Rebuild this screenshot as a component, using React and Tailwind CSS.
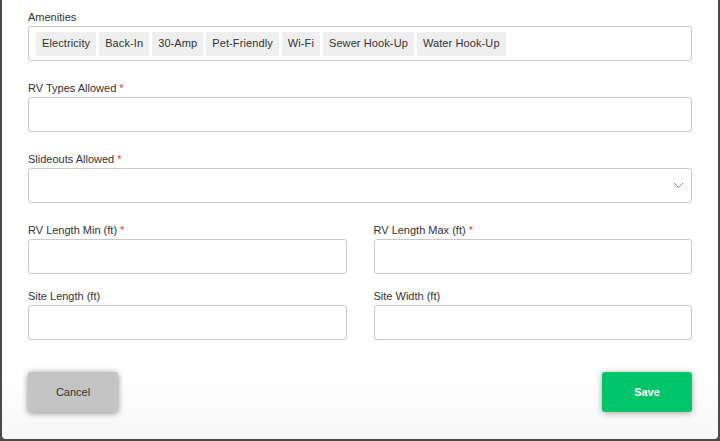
import React from 'react';

const amenities = ['Electricity', 'Back-In', '30-Amp', 'Pet-Friendly', 'Wi-Fi', 'Sewer Hook-Up', 'Water Hook-Up'];

const Label = ({ children, required }) => (
  <div className="text-[11px] leading-[14px] text-[#333] mb-[2px]">
    {children}
    {required && <span className="text-[#e53935] ml-[3px]">*</span>}
  </div>
);

const Input = () => (
  <div className="h-[35px] rounded-[3px] border border-[#c9c9c9] bg-white" />
);

const Field = ({ label, required, className = '', children }) => (
  <div className={className}>
    <Label required={required}>{label}</Label>
    {children || <Input />}
  </div>
);

export default function App() {
  return (
    <div
      className="h-[441px] w-[720px] bg-[#4a4a4a] px-[2px] pb-[2px]"
      style={{ fontFamily: '"Liberation Sans", Arial, sans-serif' }}
    >
      <div className="h-full rounded-b-[4px] bg-gradient-to-b from-white from-85% to-[#f7f7f7] px-[26px] pt-[10px] flex flex-col">
        <Field label="Amenities">
          <div className="h-[35px] rounded-[3px] border border-[#c9c9c9] bg-white flex items-center gap-[3px] pl-[7px]">
            {amenities.map((a) => (
              <span key={a} className="h-[24px] flex items-center px-[6px] bg-[#efefef] text-[11px] tracking-[0.1px] text-[#333]">
                {a}
              </span>
            ))}
          </div>
        </Field>

        <Field label="RV Types Allowed" required className="mt-[20px]" />

        <Field label="Slideouts Allowed" required className="mt-[20px]">
          <div className="h-[35px] rounded-[3px] border border-[#c9c9c9] bg-white flex items-center justify-end pr-[7px]">
            <svg width="11" height="7" viewBox="0 0 11 7" fill="none">
              <polyline points="1,1 5.5,5.5 10,1" stroke="#8a8a8a" strokeWidth="1" />
            </svg>
          </div>
        </Field>

        <div className="grid grid-cols-2 gap-x-[27px] mt-[20px]">
          <Field label="RV Length Min (ft)" required />
          <Field label="RV Length Max (ft)" required />
        </div>

        <div className="grid grid-cols-2 gap-x-[27px] mt-[15px]">
          <Field label="Site Length (ft)" />
          <Field label="Site Width (ft)" />
        </div>

        <div className="flex justify-between mt-[32px]">
          <button className="w-[90px] h-[40px] rounded-[3px] bg-[#c4c4c4] text-[11px] text-[#333] shadow-[0_1px_6px_rgba(0,0,0,0.45)]">
            Cancel
          </button>
          <button className="w-[90px] h-[40px] rounded-[3px] bg-[#02c56a] text-[11px] font-bold text-white shadow-[0_1px_6px_rgba(0,0,0,0.35)]">
            Save
          </button>
        </div>
      </div>
    </div>
  );
}
